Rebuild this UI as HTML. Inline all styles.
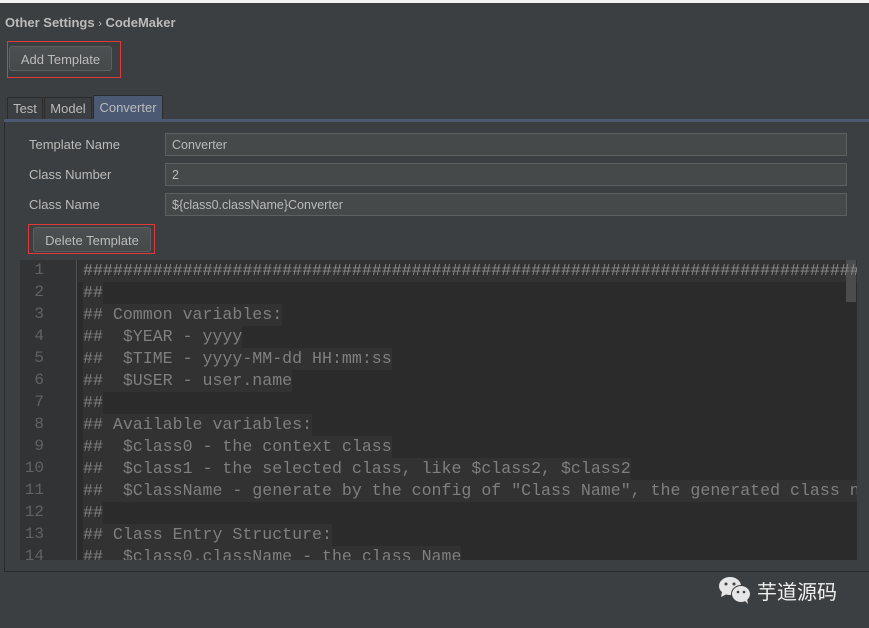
<!DOCTYPE html>
<html><head><meta charset="utf-8"><style>
*{margin:0;padding:0;box-sizing:border-box}
body{width:869px;height:628px;background:#3c3f41;font-family:"Liberation Sans",sans-serif;font-size:13px;color:#bbbbbb;position:relative;overflow:hidden}
.abs{position:absolute}
.btn{position:absolute;background:linear-gradient(#4c5052,#45494a);border:1px solid #5e6060;border-radius:3px;color:#bbb;font-size:13px;text-align:center}
.red{position:absolute;border:1px solid #e0393a}
.tab{position:absolute;top:97px;height:22px;border:1px solid #2b2b2b;border-bottom:none;font-size:13px;padding-top:3px;text-align:center;color:#bbb}
.lbl{position:absolute;left:29px;font-size:13px;color:#bbb}
.inp{position:absolute;left:165px;width:682px;height:23px;background:#45494a;border:1px solid #5d5f61;padding:4px 6px;font-size:12.5px;color:#bbb}
.code{position:absolute;left:20px;top:260px;width:837px;height:300px;background:#2b2b2b;overflow:hidden}
.gut{position:absolute;left:0;top:0;width:57px;height:300px;background:#313335;border-right:1px solid #555}
.ln{position:absolute;left:0;width:24px;text-align:right;font-family:"Liberation Mono",monospace;font-size:16px;color:#606366}
.tx{position:absolute;left:63px;font-family:"Liberation Mono",monospace;font-size:16.6px;color:#7f7f7f;white-space:pre;background:#323232;height:22px;line-height:22px}
</style></head><body>
<div class="abs" style="left:0;top:0;width:869px;height:3px;background:#f2f2f2"></div>
<div class="abs" style="left:5px;top:15px;font-weight:bold;font-size:13px;color:#bbb">Other Settings <span style="font-weight:normal;font-size:11px">›</span> CodeMaker</div>
<div class="red" style="left:7px;top:41px;width:114px;height:37px"></div>
<div class="btn" style="left:9px;top:46px;width:103px;height:25px;padding-top:5px">Add Template</div>
<div class="tab" style="left:7px;width:36px">Test</div>
<div class="tab" style="left:44px;width:48px">Model</div>
<div class="tab" style="left:93px;width:70px;top:95px;height:24px;background:#4b5a72;padding-top:4px">Converter</div>
<div class="abs" style="left:4px;top:119px;width:865px;height:3px;background:#4b5a72"></div>
<div class="abs" style="left:4px;top:122px;width:1px;height:450px;background:#2b2b2b"></div>
<div class="abs" style="left:4px;top:571px;width:865px;height:1px;background:#2b2b2b"></div>
<div class="lbl" style="top:137px">Template Name</div>
<div class="inp" style="top:133px">Converter</div>
<div class="lbl" style="top:167px">Class Number</div>
<div class="inp" style="top:163px">2</div>
<div class="lbl" style="top:197px">Class Name</div>
<div class="inp" style="top:193px">${class0.className}Converter</div>
<div class="red" style="left:28px;top:224px;width:127px;height:30px"></div>
<div class="btn" style="left:33px;top:227px;width:118px;height:25px;padding-top:5px">Delete Template</div>
<div class="code">
<div class="gut"></div>
<div class="abs" style="left:58px;top:0;width:779px;height:22px;background:#323232"></div>
<div class="abs" style="left:826px;top:0;width:10px;height:42px;background:#4a4c4e"></div>
<div class="ln" style="top:1px">1</div><div class="ln" style="top:23px">2</div><div class="ln" style="top:45px">3</div><div class="ln" style="top:67px">4</div><div class="ln" style="top:89px">5</div><div class="ln" style="top:111px">6</div><div class="ln" style="top:133px">7</div><div class="ln" style="top:155px">8</div><div class="ln" style="top:177px">9</div><div class="ln" style="top:199px">10</div><div class="ln" style="top:221px">11</div><div class="ln" style="top:243px">12</div><div class="ln" style="top:265px">13</div><div class="ln" style="top:287px">14</div>
<div class="tx" style="top:0;color:#8a8a8a;background:none">##############################################################################</div>
<div class="tx" style="top:22px">##</div>
<div class="tx" style="top:44px">## Common variables:</div>
<div class="tx" style="top:66px">##  $YEAR - yyyy</div>
<div class="tx" style="top:88px">##  $TIME - yyyy-MM-dd HH:mm:ss</div>
<div class="tx" style="top:110px">##  $USER - user.name</div>
<div class="tx" style="top:132px">##</div>
<div class="tx" style="top:154px">## Available variables:</div>
<div class="tx" style="top:176px">##  $class0 - the context class</div>
<div class="tx" style="top:198px">##  $class1 - the selected class, like $class2, $class2</div>
<div class="tx" style="top:220px">##  $ClassName - generate by the config of "Class Name", the generated class name</div>
<div class="tx" style="top:242px">##</div>
<div class="tx" style="top:264px">## Class Entry Structure:</div>
<div class="tx" style="top:286px">##  $class0.className - the class Name</div>
</div>
<svg class="abs" style="left:716px;top:572px" width="40" height="34" viewBox="0 0 40 34">
<ellipse cx="14" cy="14" rx="11" ry="9" fill="#e6e6e6"/><path d="M6 20 L5 25 L11 22Z" fill="#e6e6e6"/>
<ellipse cx="10" cy="12" rx="1.5" ry="1.5" fill="#3c3f41"/><ellipse cx="18" cy="12" rx="1.5" ry="1.5" fill="#3c3f41"/>
<ellipse cx="25" cy="22" rx="10" ry="9" fill="#3c3f41"/>
<ellipse cx="25" cy="22" rx="9" ry="8" fill="#e6e6e6"/><path d="M28 28 L32 32 L31 27Z" fill="#e6e6e6"/>
<circle cx="22" cy="20" r="1.3" fill="#3c3f41"/><circle cx="28" cy="20" r="1.3" fill="#3c3f41"/>
</svg>
<div class="abs" style="left:757px;top:576px;font-family:'Liberation Sans','Noto Sans CJK SC',sans-serif;font-size:20px;color:#f0f0f0">芋道源码</div>
</body></html>
